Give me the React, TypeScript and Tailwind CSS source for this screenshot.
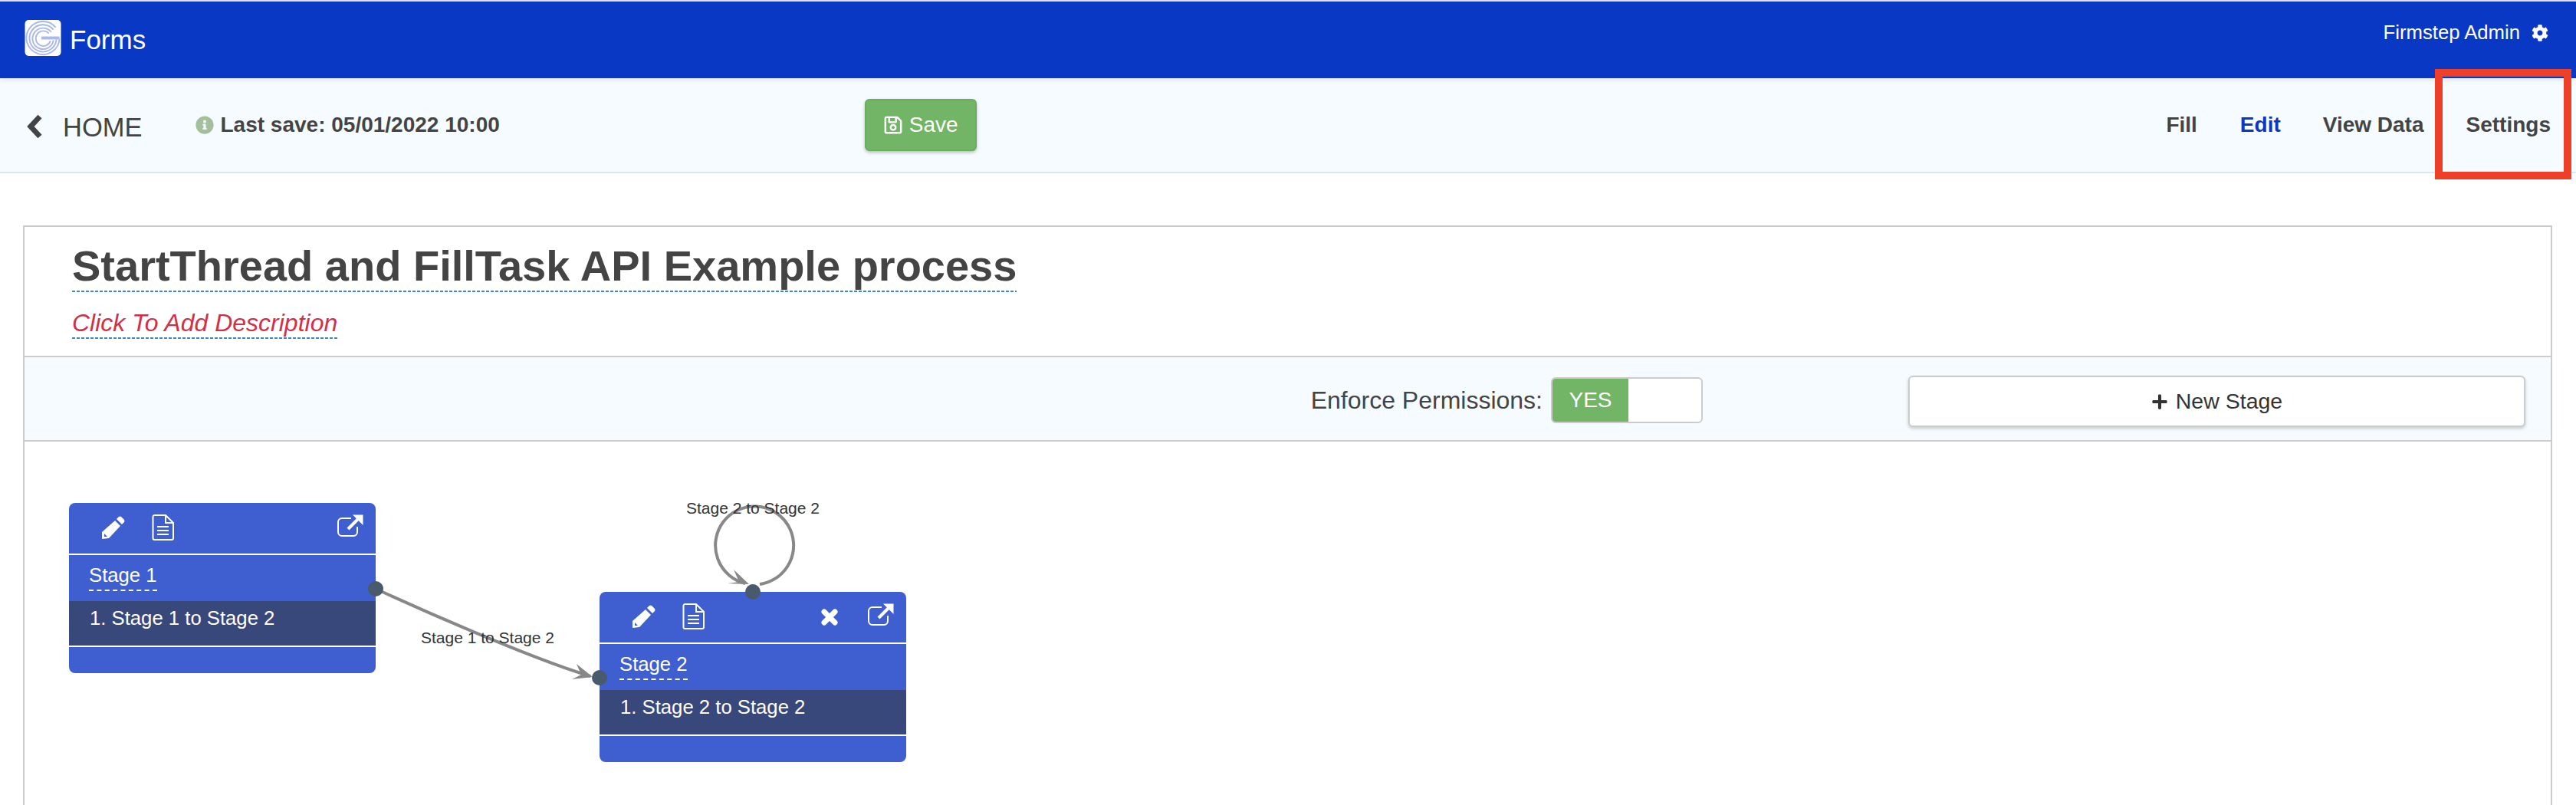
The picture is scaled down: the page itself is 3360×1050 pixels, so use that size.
import React from 'react';
import { FaCog, FaInfoCircle, FaPlus, FaRegSave } from 'react-icons/fa';

const Logo = () => (
    <svg viewBox="0 0 48 48" className="w-[48px] h-[47px] shrink-0">
        <rect width="48" height="48" rx="5" fill="#fff" />
        <g fill="none" stroke="#a9b9ea" strokeWidth="2">
            <path d="M41 10 A22 22 0 1 0 46 25" />
            <path d="M38 13 A18 18 0 1 0 42 26" />
            <path d="M35 16 A14 14 0 1 0 38 27" />
            <path d="M32 18 A10 10 0 1 0 34 28" />
        </g>
        <path d="M22 22 H46 V26 H22 Z" fill="#a9b9ea" />
    </svg>
);

const Chevron = () => (
    <svg viewBox="0 0 21 32" className="w-[21px] h-[32px] mt-[4px] shrink-0" fill="none" stroke="#444" strokeWidth="7">
        <path d="M18 3 L6 16 L18 29" />
    </svg>
);

const PencilIcon = () => (
    <svg viewBox="0 0 30 30" className="w-[30px] h-[30px] mt-[2px]" fill="#fff">
        <path d="M19 4 L22 1 Q23.5 0 25 1 L29 5 Q30 6.5 29 8 L26 11 Z" />
        <path fillRule="evenodd" d="M17 6 L24 13 L9 29 L0 30 L0 21 Z M3 23 L3 27 L7 27 Z" />
    </svg>
);

const TimesIcon = () => (
    <svg viewBox="0 0 22 22" className="w-[22px] h-[22px] mt-[7px] mr-[39px]" fill="none" stroke="#fff" strokeWidth="7" strokeLinecap="round">
        <path d="M4 4 L18 18 M18 4 L4 18" />
    </svg>
);

const DocIcon = () => (
    <svg viewBox="0 0 29 34" className="w-[29px] h-[34px]" fill="none" stroke="#fff" strokeWidth="2">
        <path d="M1.5 3 a2 2 0 0 1 2 -2 H18 L28 11 V31 a2 2 0 0 1 -2 2 H3.5 a2 2 0 0 1 -2 -2 Z" />
        <path d="M18 1 V11 H28" />
        <path d="M7 16 H22 M7 21 H22 M7 26 H22" />
    </svg>
);

const ExternalIcon = () => (
    <svg viewBox="0 0 34 29" className="w-[34px] h-[29px]" fill="none" stroke="#fff">
        <path d="M18 5 H6 a5 5 0 0 0 -5 5 V23 a5 5 0 0 0 5 5 H21 a5 5 0 0 0 5 -5 V16" strokeWidth="2" />
        <path d="M14 19 L29 4" strokeWidth="4" />
        <path d="M20 0.5 H33.5 V14 Z" fill="#fff" stroke="none" />
    </svg>
);

const Dot = ({ className }: { className: string }) => (
    <div className={`absolute w-[20px] h-[20px] rounded-full bg-[#4a5a6d] ${className}`} />
);

const StageCard = ({ name, rule, canDelete, className }: { name: string; rule: string; canDelete?: boolean; className: string }) => (
    <div className={`absolute w-[400px] h-[222px] rounded-[8px] bg-[#3f5fd0] text-white text-[25.7px] leading-none flex flex-col ${className}`}>
        <div className="h-[66px] flex items-start pt-[15px] pl-[43px] pr-[16px] shrink-0">
            <PencilIcon />
            <div className="ml-[35px]"><DocIcon /></div>
            <div className="ml-auto flex items-start">
                {canDelete && <TimesIcon />}
                <ExternalIcon />
            </div>
        </div>
        <div className="h-[2px] bg-white shrink-0" />
        <div className="h-[60px] pl-[26px] pt-[14px] shrink-0">
            <span className="inline-block pb-[5px] border-b-2 border-dashed border-white">{name}</span>
        </div>
        <div className="h-[58px] bg-[#39487a] pl-[27px] pt-[10px] shrink-0">{rule}</div>
        <div className="h-[2px] bg-white shrink-0" />
    </div>
);

const App: React.FC = () => {
    return (
        <div className="relative w-[3360px] h-[1050px] overflow-hidden bg-white font-['Liberation_Sans',Arial,sans-serif] text-[#444]">
            <div className="h-[2px] bg-[#e4e4e4]" />
            <div className="relative z-10 h-[100px] bg-[#0838c4] text-white flex justify-between pl-[32px] pr-[36px] shadow-[0_2px_6px_rgba(0,0,0,0.1)]">
                <div className="flex items-start pt-[24px]">
                    <Logo />
                    <span className="ml-[11px] text-[35px] leading-[52px]">Forms</span>
                </div>
                <div className="flex items-start pt-[24px]">
                    <span className="text-[25.7px] leading-[32px]">Firmstep Admin</span>
                    <FaCog className="ml-[15px] mt-[6px] w-[22px] h-[22px]" />
                </div>
            </div>

            <div className="h-[124px] bg-[#f5fbfe] border-b-2 border-[#d9e8f0] flex items-center pl-[34px] pr-[33px]">
                <Chevron />
                <span className="ml-[27px] text-[34.5px] leading-none mt-[6px]">HOME</span>
                <FaInfoCircle className="ml-[69px] w-[24px] h-[24px] text-[#a3bf9b]" />
                <span className="ml-[9px] text-[28px] font-bold leading-none">Last save: 05/01/2022 10:00</span>
                <button className="ml-[476px] w-[146px] h-[68px] rounded-[6px] bg-[#72b566] border-2 border-[#6aad5f] shadow-[0_2px_4px_rgba(0,0,0,0.25)] text-white text-[28px] flex items-center justify-center gap-[8px]">
                    <FaRegSave className="w-[26px] h-[26px]" />
                    Save
                </button>
                <nav className="ml-auto flex items-center text-[28px] font-bold">
                    <a>Fill</a>
                    <a className="ml-[56px] text-[#0838c4]">Edit</a>
                    <a className="ml-[55px]">View Data</a>
                    <a className="ml-[55px]">Settings</a>
                </nav>
            </div>

            <div className="ml-[30px] mr-[31px] mt-[68px] border-2 border-b-0 border-[#ccc]">
                <div className="h-[168px] pl-[62px] pt-[19px]">
                    <div>
                        <span className="inline-block text-[56px] font-bold leading-[64px] pb-[2px] bg-[repeating-linear-gradient(to_right,#3a8acb_0,#3a8acb_4px,transparent_4px,transparent_6px)] bg-[length:100%_2px] bg-bottom bg-no-repeat">StartThread and FillTask API Example process</span>
                    </div>
                    <div className="mt-[21px]">
                        <span className="inline-block text-[32px] italic text-[#d0304a] leading-[38px] pb-[2px] bg-[repeating-linear-gradient(to_right,#3a8acb_0,#3a8acb_4px,transparent_4px,transparent_6px)] bg-[length:100%_2px] bg-bottom bg-no-repeat">Click To Add Description</span>
                    </div>
                </div>
                <div className="h-[112px] bg-[#f5fbfe] border-y-2 border-[#ccc] flex items-center justify-end pr-[33px]">
                    <span className="mt-[3px] text-[32px] leading-none">Enforce Permissions:</span>
                    <div className="mt-[4px] ml-[11px] w-[198px] h-[60px] rounded-[6px] border-2 border-[#ccc] bg-white overflow-hidden flex">
                        <div className="w-[99px] bg-[#72b566] text-white text-[28px] flex items-center justify-center">YES</div>
                    </div>
                    <button className="mt-[7px] ml-[268px] w-[805px] h-[67px] bg-white rounded-[6px] border-2 border-[#ccc] shadow-[0_2px_4px_rgba(0,0,0,0.2)] text-[#333] text-[28.5px] flex items-center justify-center gap-[10px]">
                        <FaPlus className="w-[22px] h-[22px]" />
                        New Stage
                    </button>
                </div>
                <div className="relative h-[474px]">
                    <svg className="absolute left-[-32px] top-[-576px] w-[3360px] h-[1050px] pointer-events-none" viewBox="0 0 3360 1050" fill="none" stroke="#888" strokeWidth="4">
                        <path d="M490 768 C 540 791 690 858 770 882" />
                        <path d="M773 883 L752 866 L758 880 L746 886 Z" fill="#888" stroke="none" />
                        <path d="M991 762 A 51 51 0 1 0 972 761" />
                        <path d="M977 762 L957 743 L964 759 L949 761 Z" fill="#888" stroke="none" />
                    </svg>
                    <StageCard className="left-[58px] top-[80px]" name="Stage 1" rule="1. Stage 1 to Stage 2" />
                    <StageCard className="left-[750px] top-[196px]" name="Stage 2" rule="1. Stage 2 to Stage 2" canDelete />
                    <Dot className="left-[448px] top-[182px]" />
                    <Dot className="left-[740px] top-[298px]" />
                    <Dot className="left-[940px] top-[186px]" />
                    <span className="absolute left-[517px] top-[245px] text-[21px] leading-none text-[#333]">Stage 1 to Stage 2</span>
                    <span className="absolute left-[863px] top-[76px] text-[21px] leading-none text-[#333]">Stage 2 to Stage 2</span>
                </div>
            </div>

            <div className="absolute left-[3176px] top-[90px] w-[178px] h-[144px] border-[10px] border-[#ee4028] z-20" />
        </div>
    );
};

export default App;
